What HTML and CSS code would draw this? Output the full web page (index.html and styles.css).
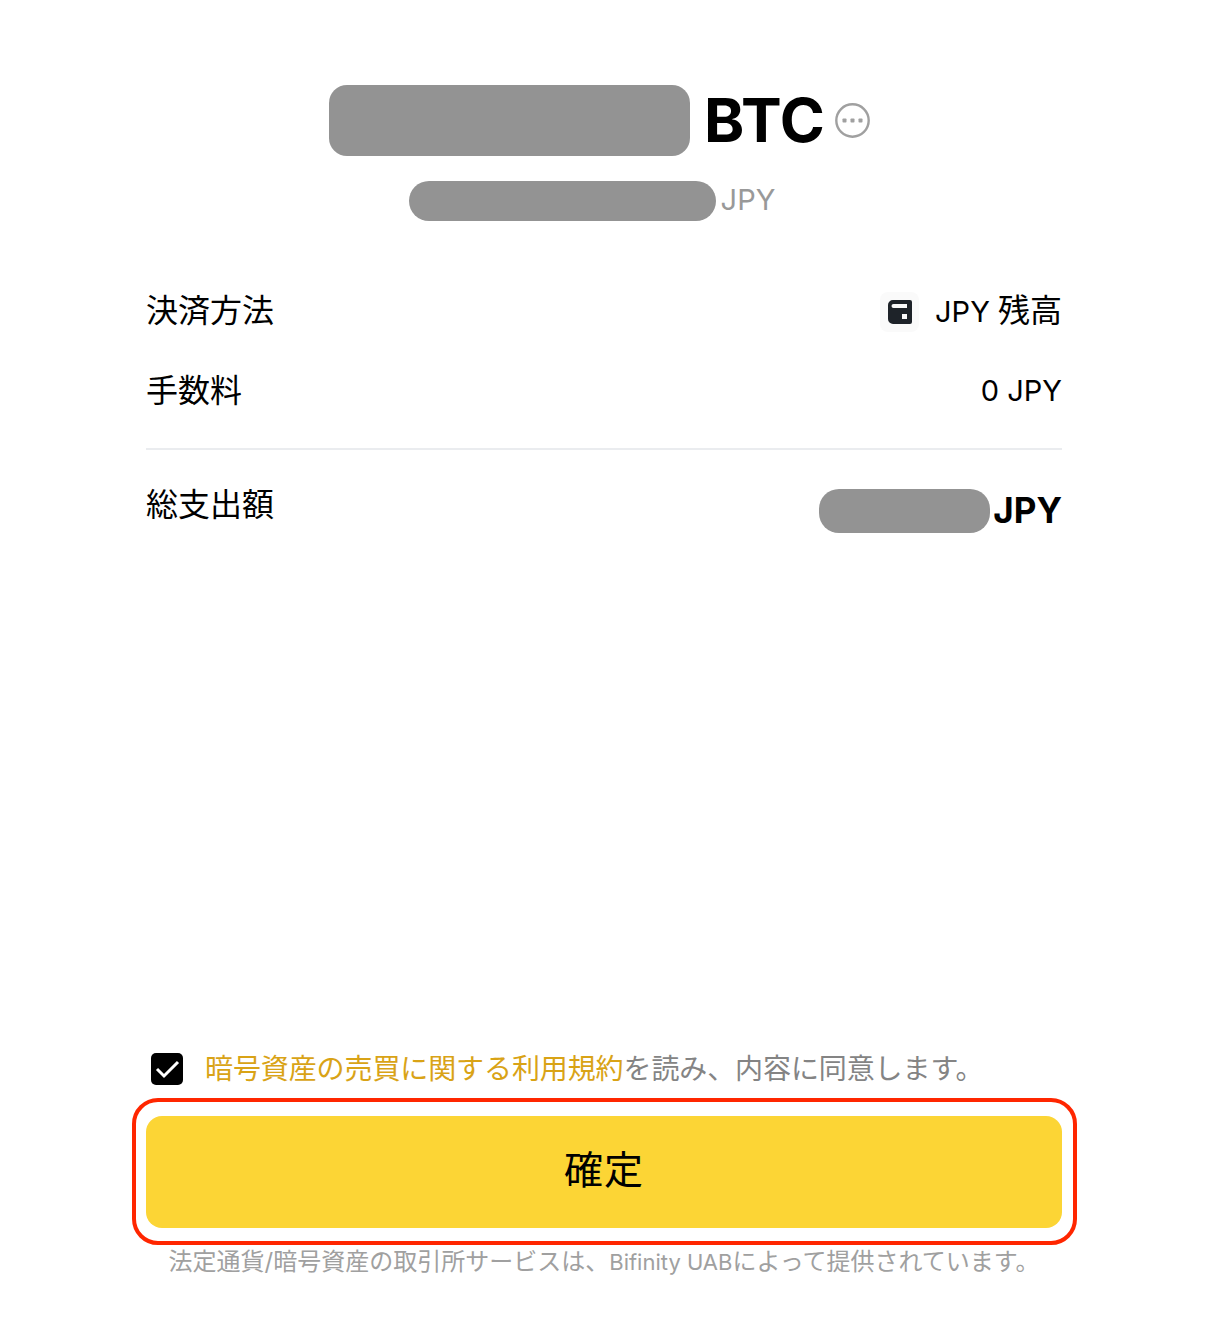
FILE: index.html
```html
<!DOCTYPE html>
<html lang="ja">
<head>
<meta charset="utf-8">
<title>確定</title>
<link rel="stylesheet" href="styles.css">
</head>
<body>
<main class="page">
  <section class="head">
    <div class="amount">
      <span class="mask mask-lg"></span>
      <span class="coin">BTC</span>
      <svg class="more" width="35" height="35" viewBox="0 0 35 35" aria-hidden="true">
        <circle cx="17.5" cy="17.5" r="16.2" fill="none" stroke="#a0a0a0" stroke-width="2.400"/>
        <rect x="7.500" y="15.500" width="4" height="4" rx="0.800" fill="#a0a0a0"/>
        <rect x="15.500" y="15.500" width="4" height="4" rx="0.800" fill="#a0a0a0"/>
        <rect x="23.500" y="15.500" width="4" height="4" rx="0.800" fill="#a0a0a0"/>
      </svg>
    </div>
    <div class="sub">
      <span class="mask mask-md"></span>
      <span class="sub-cur">JPY</span>
    </div>
  </section>

  <section class="rows">
    <div class="row">
      <span class="label">決済方法</span>
      <span class="value">
        <span class="wallet">
          <svg width="24" height="24" viewBox="0 0 24 24" aria-hidden="true">
            <path fill="#1e2329" fill-rule="evenodd" d="M5 0h17a2 2 0 0 1 2 2v20a2 2 0 0 1-2 2H5a5 5 0 0 1-5-5V5a5 5 0 0 1 5-5ZM5.500 4a2 2 0 0 0 0 4H19V4H5.500ZM14 14v5h5v-5h-5Z"/>
          </svg>
        </span>
        <span class="value-text">JPY <span class="cjk">残高</span></span>
      </span>
    </div>
    <div class="row row-fee">
      <span class="label">手数料</span>
      <span class="value"><span class="value-text">0 JPY</span></span>
    </div>
    <div class="row row-total">
      <span class="label label-total">総支出額</span>
      <span class="total"><span class="mask mask-sm"></span><b class="total-cur">JPY</b></span>
    </div>
  </section>

  <section class="foot">
    <label class="agree">
      <span class="check">
        <svg width="32" height="32" viewBox="0 0 32 32" aria-hidden="true">
          <path d="M6 16l7 7L27 9" fill="none" stroke="#fff" stroke-width="3"/>
        </svg>
      </span>
      <span class="agree-text"><span class="link">暗号資産の売買に関する利用規約</span>を読み、内容に同意します。</span>
    </label>
    <div class="cta">
      <button class="confirm" type="button">確定</button>
      <span class="highlight"></span>
    </div>
    <p class="note">法定通貨/暗号資産の取引所サービスは、<span class="note-latin">Bifinity UAB</span>によって提供されています。</p>
  </section>
</main>
</body>
</html>
```

FILE: styles.css
```css
* { box-sizing: border-box; }
html, body { margin: 0; height: 100%; background: #fff; }
body {
  font-family: "Inter", "Noto Sans CJK JP", sans-serif;
  color: #000;
}
.page {
  width: 916px;
  height: 1320px;
  margin: 0 auto 0 146px;
  display: flex;
  flex-direction: column;
}
.head {
  padding-top: 85px;
  display: flex;
  flex-direction: column;
  align-items: center;
}
.mask { display: block; background: #939393; flex: none; }
.amount { display: flex; align-items: center; height: 71px; padding-right: 9px; }
.mask-lg { width: 361px; height: 71px; border-radius: 18px; }
.coin {
  margin-left: 14px;
  font-size: 61px;
  font-weight: 700;
  line-height: 71px;
}
.more { margin-left: 10px; margin-bottom: 1px; display: block; }
.sub { display: flex; align-items: center; height: 40px; margin-top: 25px; padding-right: 24px; }
.mask-md { width: 307px; height: 40px; border-radius: 20px; }
.sub-cur { margin-left: 5px; font-size: 29px; line-height: 38px; margin-bottom: 2px; color: #999; }
.rows { margin-top: 69px; }
.row {
  display: flex;
  justify-content: space-between;
  align-items: center;
  height: 40px;
  font-size: 32px;
}
.row-fee { margin-top: 40px; }
.row-total {
  margin-top: 38px;
  padding-top: 40px;
  height: 124px;
  align-items: flex-start;
  border-top: 2px solid #eaecef;
}
.label { line-height: 40px; padding-top: 2px; }
.label-total { margin-top: -7px; }
.value { display: flex; align-items: center; line-height: 40px; font-size: 29px; }
.value-text { padding-top: 2px; }
.cjk { font-size: 32px; }
.wallet {
  width: 39px;
  height: 40px;
  margin-top: 4px;
  margin-right: 16px;
  border-radius: 8px;
  background: #fafafa;
  display: flex;
  align-items: center;
  justify-content: center;
}
.wallet svg { display: block; }
.total { display: flex; align-items: center; margin-top: -1px; }
.mask-sm { width: 171px; height: 44px; border-radius: 20px; }
.total-cur { margin-left: 3px; margin-bottom: 2px; font-size: 35px; font-weight: 700; line-height: 42px; }
.foot { margin-top: auto; padding-bottom: 41px; }
.agree { display: flex; align-items: center; height: 40px; padding-left: 5px; }
.check {
  width: 32px;
  height: 32px;
  border-radius: 5px;
  background: #000;
  flex: none;
  display: block;
}
.check svg { display: block; }
.agree-text { margin-left: 22px; font-size: 28px; letter-spacing: -0.100px; line-height: 40px; color: #848484; white-space: nowrap; }
.link { color: #d9a316; }
.cta { position: relative; margin-top: 27px; }
.confirm {
  display: block;
  width: 100%;
  height: 112px;
  border: 0;
  padding: 0 0 10px;
  border-radius: 16px;
  background: #fcd535;
  color: #000;
  font: inherit;
  font-size: 39px;
  letter-spacing: 1px;
}
.highlight {
  position: absolute;
  left: -14px;
  right: -15px;
  top: -18px;
  bottom: -17px;
  border: 4px solid #ff2600;
  border-radius: 26px;
  pointer-events: none;
}
.note {
  margin: 17px 0 0;
  font-size: 24px;
  line-height: 34px;
  color: #a0a0a0;
  text-align: center;
  white-space: nowrap;
}
.note-latin { font-size: 22px; }
```
